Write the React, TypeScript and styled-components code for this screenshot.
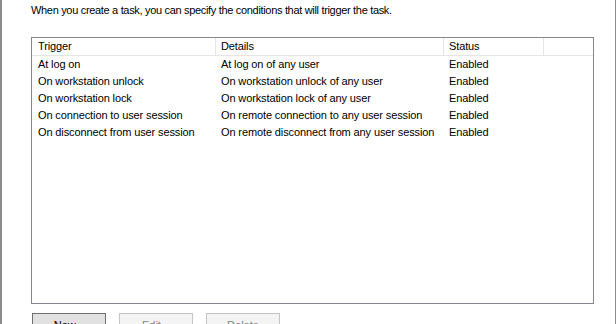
import React from 'react';
import styled, { createGlobalStyle } from 'styled-components';

const GlobalStyle = createGlobalStyle`
  html, body {
    margin: 0;
    padding: 0;
    background: #ffffff;
  }
  body {
    font-family: "Liberation Sans", Arial, sans-serif;
    font-size: 11px;
    color: #000000;
  }
`;

const columns = [
  { title: 'Trigger', width: 183 },
  { title: 'Details', width: 228 },
  { title: 'Status', width: 100 },
];

const rows = [
  ['At log on', 'At log on of any user', 'Enabled'],
  ['On workstation unlock', 'On workstation unlock of any user', 'Enabled'],
  ['On workstation lock', 'On workstation lock of any user', 'Enabled'],
  ['On connection to user session', 'On remote connection to any user session', 'Enabled'],
  ['On disconnect from user session', 'On remote disconnect from any user session', 'Enabled'],
];

function App() {
  return (
    <>
      <GlobalStyle />
      <Frame>
        <Intro>When you create a task, you can specify the conditions that will trigger the task.</Intro>
        <ListBox>
          <HeaderRow>
            {columns.map((c, i) => (
              <HeaderCell key={c.title} $width={c.width} $first={i === 0}>
                {c.title}
              </HeaderCell>
            ))}
            <HeaderFiller />
          </HeaderRow>
          {rows.map((r) => (
            <Row key={r[0]}>
              {r.map((text, i) => (
                <Cell key={i} $width={columns[i].width}>
                  {text}
                </Cell>
              ))}
            </Row>
          ))}
        </ListBox>
        <Buttons>
          <Button $primary>New...</Button>
          <Button disabled>Edit...</Button>
          <Button disabled>Delete</Button>
        </Buttons>
      </Frame>
    </>
  );
}

export default App;

const Frame = styled.div`
  width: 616px;
  height: 324px;
  box-sizing: border-box;
  border-left: 2px solid #8c8c8c;
  border-right: 1px solid #8c8c8c;
  padding: 2px 0 0 29px;
  overflow: hidden;
  display: flex;
  flex-direction: column;
`;

const Intro = styled.div`
  height: 16px;
  line-height: 16px;
  letter-spacing: -0.32px;
  white-space: nowrap;
`;

const ListBox = styled.div`
  margin-top: 19px;
  width: 563px;
  height: 267px;
  box-sizing: border-box;
  border: 1px solid #828790;
  background: #ffffff;
  flex-shrink: 0;
  letter-spacing: -0.12px;
`;

const HeaderRow = styled.div`
  display: flex;
  height: 17px;
  border-bottom: 1px solid #e5e5e5;
`;

const HeaderCell = styled.div<{ $width: number; $first?: boolean }>`
  width: ${(p) => p.$width}px;
  box-sizing: border-box;
  padding-left: ${(p) => (p.$first ? 6 : 5)}px;
  border-left: ${(p) => (p.$first ? 'none' : '1px solid #e5e5e5')};
  line-height: 17px;
  white-space: nowrap;
`;

const HeaderFiller = styled.div`
  flex: 1;
  border-left: 1px solid #e5e5e5;
`;

const Row = styled.div`
  display: flex;
  height: 17px;
`;

const Cell = styled.div<{ $width: number }>`
  width: ${(p) => p.$width}px;
  box-sizing: border-box;
  padding-left: 6px;
  line-height: 17px;
  white-space: nowrap;
  overflow: hidden;
`;

const Buttons = styled.div`
  display: flex;
  gap: 13px;
  margin-top: 9px;
  padding-left: 1px;
`;

const Button = styled.button<{ $primary?: boolean }>`
  width: 74px;
  height: 23px;
  flex-shrink: 0;
  box-sizing: border-box;
  font: inherit;
  padding: 0;
  border: 1px solid ${(p) => (p.$primary ? '#707070' : '#c4c4c4')};
  background: ${(p) => (p.$primary ? '#e1e1e1' : '#f4f4f4')};
  color: ${(p) => (p.$primary ? '#000000' : '#838383')};
  &:disabled {
    color: #838383;
  }
`;
